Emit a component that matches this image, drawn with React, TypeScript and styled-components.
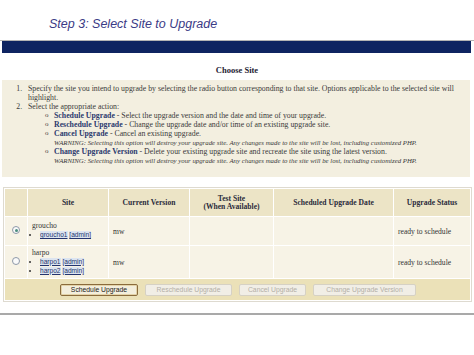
import React from "react";
import styled, { createGlobalStyle } from "styled-components";

const Global = createGlobalStyle`
  html, body { margin: 0; padding: 0; background: #ffffff; }
  body { width: 474px; height: 355px; overflow: hidden; }
`;

const Page = styled.div`
  width: 474px;
  height: 355px;
  display: flex;
  flex-direction: column;
  font-family: "Liberation Serif", "Times New Roman", serif;
  color: #2a2a2a;
`;

const Title = styled.h1`
  margin: 0;
  padding: 17px 0 0 49px;
  height: 23px;
  font-family: "Liberation Sans", Arial, sans-serif;
  font-style: italic;
  font-weight: normal;
  font-size: 12.5px;
  color: #3b3b86;
`;

const TopRule = styled.div`
  border-top: 1px solid #b4b4b4;
  padding: 0 3px 0 2px;
`;

const NavyBar = styled.div`
  height: 12px;
  background: #0e2461;
`;

const Heading = styled.h2`
  margin: 12px 0 5px;
  text-align: center;
  font-size: 8.5px;
  font-weight: bold;
  color: #1e2233;
`;

const InfoBox = styled.div`
  margin: 0 4px 0 2px;
  height: 97px;
  box-sizing: border-box;
  padding: 4px 12px 0 14px;
  background: #f3efe0;
  font-size: 7.8px;
  line-height: 9px;
  color: #3a3a3a;
`;

const Steps = styled.ol`
  margin: 0;
  padding-left: 12px;
  & > li::marker {
    content: counter(list-item) ".   ";
  }
`;

const SubList = styled.ul`
  margin: 0;
  padding-left: 26px;
  list-style: none;
`;

const SubItem = styled.li`
  position: relative;
  &::before {
    content: "o";
    position: absolute;
    left: -9px;
    top: 0;
    font-size: 7px;
  }
`;

const Term = styled.b`
  color: #2c3a6e;
`;

const Warning = styled.i`
  display: block;
  font-size: 6.8px;
`;

const TableWrap = styled.div`
  margin: 10px 3px 0 3px;
`;

const Table = styled.table`
  width: 468px;
  border-collapse: separate;
  border-spacing: 1px;
  border: 1px solid #dedad0;
  background: #ffffff;
  table-layout: fixed;
  font-size: 7.6px;
`;

const Th = styled.th<{ $w: number }>`
  width: ${(p) => p.$w}px;
  height: 27px;
  padding: 0;
  background: #ece4c6;
  font-size: 7.6px;
  line-height: 8px;
  font-weight: bold;
  color: #2a2a3a;
  text-align: center;
`;

const Td = styled.td<{ $h: number; $center?: boolean }>`
  height: ${(p) => p.$h}px;
  padding: 0 4px;
  background: #f7f3e6;
  vertical-align: middle;
  text-align: ${(p) => (p.$center ? "center" : "left")};
  color: #333;
  line-height: 9px;
`;

const SiteName = styled.div`
  margin-top: -2px;
`;

const Links = styled.ul`
  margin: 0;
  padding-left: 8px;
  list-style: disc;
  font-family: "Liberation Sans", Arial, sans-serif;
  font-size: 6.6px;
  line-height: 9px;
`;

const LinkTag = styled.a`
  color: #24346e;
  background: #dce4f0;
  text-decoration: underline;
`;

const Radio = styled.span<{ $on?: boolean }>`
  display: inline-block;
  width: 6px;
  height: 6px;
  border: 1px solid #8e99a8;
  border-radius: 50%;
  background: #fafafa;
  position: relative;
  &::after {
    content: "";
    display: ${(p) => (p.$on ? "block" : "none")};
    position: absolute;
    left: 1.5px;
    top: 1.5px;
    width: 3px;
    height: 3px;
    border-radius: 50%;
    background: #4b8c7e;
  }
`;

const ButtonCell = styled.td`
  height: 21px;
  padding: 0 0 0 55px;
  background: #ebe1b8;
`;

const ButtonRow = styled.div`
  display: flex;
  gap: 7px;
  align-items: center;
`;

const Btn = styled.button<{ $w: number; $active?: boolean }>`
  width: ${(p) => p.$w}px;
  height: 12px;
  padding: 0;
  font-family: "Liberation Sans", Arial, sans-serif;
  font-size: 6.8px;
  line-height: 10px;
  border-radius: 2px;
  border: 1px solid ${(p) => (p.$active ? "#8a6b3c" : "#d6d1c4")};
  background: ${(p) => (p.$active ? "#f3eedc" : "#f1eee6")};
  color: ${(p) => (p.$active ? "#1a1a1a" : "#b3afa6")};
  box-shadow: ${(p) => (p.$active ? "inset 0 0 0 1px #e3d3a8" : "none")};
`;

const BottomRule = styled.div`
  margin-top: 11px;
  border-top: 2px solid #a9a9a9;
`;

const sites = [
  { name: "groucho", links: ["groucho1"], on: true, h: 28 },
  { name: "harpo", links: ["harpo1", "harpo2"], on: false, h: 32 },
];

export default function App() {
  return (
    <Page>
      <Global />
      <Title>Step 3: Select Site to Upgrade</Title>
      <TopRule>
        <NavyBar />
      </TopRule>
      <Heading>Choose Site</Heading>
      <InfoBox>
        <Steps>
          <li>
            Specify the site you intend to upgrade by selecting the radio button corresponding to that site. Options
            applicable to the selected site will highlight.
          </li>
          <li>
            Select the appropriate action:
            <SubList>
              <SubItem>
                <Term>Schedule Upgrade</Term> - Select the upgrade version and the date and time of your upgrade.
              </SubItem>
              <SubItem>
                <Term>Reschedule Upgrade</Term> - Change the upgrade date and/or time of an existing upgrade site.
              </SubItem>
              <SubItem>
                <Term>Cancel Upgrade</Term> - Cancel an existing upgrade.
                <Warning>
                  WARNING: Selecting this option will destroy your upgrade site. Any changes made to the site will be
                  lost, including customized PHP.
                </Warning>
              </SubItem>
              <SubItem>
                <Term>Change Upgrade Version</Term> - Delete your existing upgrade site and recreate the site using the
                latest version.
                <Warning>
                  WARNING: Selecting this option will destroy your upgrade site. Any changes made to the site will be
                  lost, including customized PHP.
                </Warning>
              </SubItem>
            </SubList>
          </li>
        </Steps>
      </InfoBox>
      <TableWrap>
        <Table>
          <thead>
            <tr>
              <Th $w={22} />
              <Th $w={80}>Site</Th>
              <Th $w={80}>Current Version</Th>
              <Th $w={83}>
                Test Site
                <br />
                (When Available)
              </Th>
              <Th $w={119}>Scheduled Upgrade Date</Th>
              <Th $w={76}>Upgrade Status</Th>
            </tr>
          </thead>
          <tbody>
            {sites.map((s) => (
              <tr key={s.name}>
                <Td $h={s.h} $center>
                  <Radio $on={s.on} />
                </Td>
                <Td $h={s.h}>
                  <SiteName>{s.name}</SiteName>
                  <Links>
                    {s.links.map((l) => (
                      <li key={l}>
                        <LinkTag>{l}</LinkTag> <LinkTag>[admin]</LinkTag>
                      </li>
                    ))}
                  </Links>
                </Td>
                <Td $h={s.h}>mw</Td>
                <Td $h={s.h} />
                <Td $h={s.h} />
                <Td $h={s.h}>ready to schedule</Td>
              </tr>
            ))}
            <tr>
              <ButtonCell colSpan={6}>
                <ButtonRow>
                  <Btn $w={78} $active>
                    Schedule Upgrade
                  </Btn>
                  <Btn $w={87}>Reschedule Upgrade</Btn>
                  <Btn $w={67}>Cancel Upgrade</Btn>
                  <Btn $w={103}>Change Upgrade Version</Btn>
                </ButtonRow>
              </ButtonCell>
            </tr>
          </tbody>
        </Table>
      </TableWrap>
      <BottomRule />
    </Page>
  );
}
